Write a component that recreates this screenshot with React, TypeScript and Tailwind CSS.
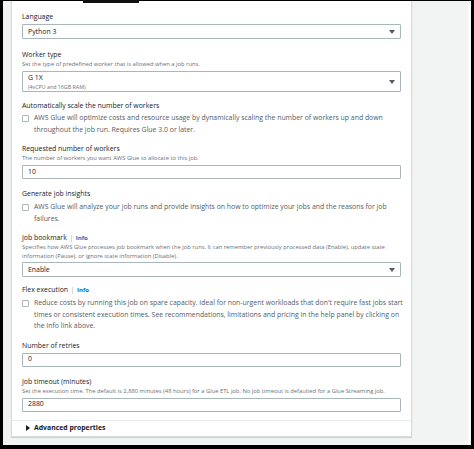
import React from "react"

function Caret() {
  return (
    <svg width="6" height="4" viewBox="0 0 6 4" className="shrink-0">
      <path d="M0 0h6L3 4z" fill="#545b64" />
    </svg>
  )
}

function Label({ children, info }: { children: React.ReactNode; info?: boolean }) {
  return (
    <div className="flex items-center h-[10px] text-[6.9px] leading-[10px] font-medium text-[#16191f]">
      <span>{children}</span>
      {info && (
        <>
          <span className="mx-[4px] h-[7px] w-px bg-[#d5dbdb]" />
          <span className="text-[6px] font-bold text-[#0073bb]">Info</span>
        </>
      )}
    </div>
  )
}

function Desc({ children }: { children: React.ReactNode }) {
  return <div className="text-[5.8px] leading-[9px] text-[#687078] whitespace-nowrap">{children}</div>
}

function Select({ value, sub }: { value: string; sub?: string }) {
  return (
    <div
      className={`flex items-center justify-between border border-[#aab7b8] rounded-[1px] px-[5px] ${
        sub ? "h-[21px]" : "h-[15px]"
      }`}
    >
      <div className="flex flex-col">
        <span className="text-[6.9px] leading-[10px] text-[#16191f]">{value}</span>
        {sub && <span className="text-[5.3px] leading-[8px] text-[#687078]">{sub}</span>}
      </div>
      <Caret />
    </div>
  )
}

function Input({ value }: { value: string }) {
  return (
    <div className="flex items-center h-[14px] border border-[#aab7b8] rounded-[1px] px-[5px] text-[6.9px] text-[#16191f]">
      {value}
    </div>
  )
}

function Check({ lines, leading }: { lines: string[]; leading: string }) {
  return (
    <div className="flex items-start gap-[5px]">
      <div className="mt-[3px] w-[7px] h-[7px] shrink-0 border border-[#aab7b8] rounded-[1px] bg-white" />
      <div className={`text-[6.9px] ${leading} text-[#545b64] whitespace-nowrap`}>
        {lines.map((l, i) => (
          <div key={i}>{l}</div>
        ))}
      </div>
    </div>
  )
}

export default function App() {
  return (
    <div
      className="w-[474px] h-[449px] bg-black pl-[3px] pt-[1px] pr-[3px] pb-[4px]"
      style={{ fontFamily: '"Open Sans", "Noto Sans", sans-serif' }}
    >
      <div className="relative h-full flex bg-[#f2f3f3] border-r-[3px] border-[#fafafa]">
        <div className="absolute left-[80px] top-[-1px] w-[56px] h-[3px] bg-[#111]" />
        <div className="ml-[8px] w-[401px] h-[436px] bg-white border border-t-0 border-[#d5dbdb] shadow-[0_1px_1px_rgba(0,0,0,0.12)] flex flex-col">
          <div className="px-[10px] pt-[11px] flex flex-col">
            <Label>Language</Label>
            <div className="mt-[2px]">
              <Select value="Python 3" />
            </div>

            <div className="mt-[11px]">
              <Label>Worker type</Label>
            </div>
            <Desc>Set the type of predefined worker that is allowed when a job runs.</Desc>
            <div className="mt-[2px]">
              <Select value="G 1X" sub="(4vCPU and 16GB RAM)" />
            </div>

            <div className="mt-[9px]">
              <Label>Automatically scale the number of workers</Label>
            </div>
            <div className="mt-[1px]">
              <Check
                leading="leading-[12px]"
                lines={[
                  "AWS Glue will optimize costs and resource usage by dynamically scaling the number of workers up and down",
                  "throughout the job run. Requires Glue 3.0 or later.",
                ]}
              />
            </div>

            <div className="mt-[8px]">
              <Label>Requested number of workers</Label>
            </div>
            <Desc>The number of workers you want AWS Glue to allocate to this job.</Desc>
            <div className="mt-[2px]">
              <Input value="10" />
            </div>

            <div className="mt-[10px]">
              <Label>Generate job insights</Label>
            </div>
            <div className="mt-[2px]">
              <Check
                leading="leading-[11.5px]"
                lines={[
                  "AWS Glue will analyze your job runs and provide insights on how to optimize your jobs and the reasons for job",
                  "failures.",
                ]}
              />
            </div>

            <div className="mt-[9px]">
              <Label info>Job bookmark</Label>
            </div>
            <Desc>
              Specifies how AWS Glue processes job bookmark when the job runs. It can remember previously processed data
              (Enable), update state
              <br />
              information (Pause), or ignore state information (Disable).
            </Desc>
            <div className="mt-[1px]">
              <Select value="Enable" />
            </div>

            <div className="mt-[8px]">
              <Label info>Flex execution</Label>
            </div>
            <div className="mt-[2px]">
              <Check
                leading="leading-[11.5px]"
                lines={[
                  "Reduce costs by running this job on spare capacity. Ideal for non-urgent workloads that don't require fast jobs start",
                  "times or consistent execution times. See recommendations, limitations and pricing in the help panel by clicking on",
                  "the Info link above.",
                ]}
              />
            </div>

            <div className="mt-[9px]">
              <Label>Number of retries</Label>
            </div>
            <div className="mt-[2px]">
              <Input value="0" />
            </div>

            <div className="mt-[10px]">
              <Label>Job timeout (minutes)</Label>
            </div>
            <Desc>
              Set the execution time. The default is 2,880 minutes (48 hours) for a Glue ETL job. No job timeout is
              defaulted for a Glue Streaming job.
            </Desc>
            <div className="mt-[2px]">
              <Input value="2880" />
            </div>
          </div>

          <div className="mt-[8px] border-t border-[#eaeded] flex-1 flex items-center px-[14px] gap-[4px]">
            <svg width="4" height="6" viewBox="0 0 4 6">
              <path d="M0 0l4 3-4 3z" fill="#16191f" />
            </svg>
            <span className="text-[6.9px] font-bold text-[#16191f]">Advanced properties</span>
          </div>
        </div>
      </div>
    </div>
  )
}
